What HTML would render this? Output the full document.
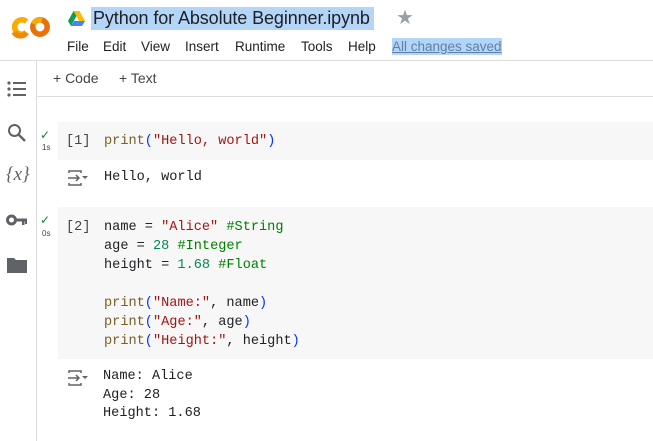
<!DOCTYPE html>
<html><head><style>
body{margin:0;width:653px;height:441px;background:#fff;position:relative;overflow:hidden;font-family:"Liberation Sans",sans-serif;color:#202124}
.a{position:absolute}
.mono{font-family:"Liberation Mono",monospace;font-size:13.6px;white-space:pre;line-height:19px;color:#202124}
.k{color:#795e26}.s{color:#a31515}.p{color:#0431fa}.n{color:#098658}.c{color:#008000}
.menu span{position:absolute;top:0;white-space:nowrap}
</style></head><body>
<svg class="a" style="left:8px;top:15px" width="46" height="24" viewBox="0 0 46 24">
<path d="M18.5 6.5A7.2 7.2 0 1 0 18.5 17.5" fill="none" stroke="#f9ab00" stroke-width="5.5"/>
<path d="M6 17A7.2 7.2 0 0 0 18.5 17.5" fill="none" stroke="#ee8a0a" stroke-width="5.5"/>
<circle cx="32" cy="12" r="7.2" fill="none" stroke="#e8710a" stroke-width="5.5"/>
<path d="M25.5 9A7.2 7.2 0 0 1 34 5" fill="none" stroke="#f9ab00" stroke-width="5.5"/>
</svg>
<svg class="a" style="left:68px;top:11px" width="17" height="15" viewBox="0 0 17 15">
<polygon points="5.5,0 11.5,0 17,10 14,15" fill="#fbbc04"/>
<polygon points="5.5,0 0,10 3,15 8.5,5" fill="#0f9d58"/>
<polygon points="3,15 14,15 17,10 6,10" fill="#4285f4"/>
</svg>
<div class="a" style="left:91px;top:7px;height:23px;background:#b3d5f8;font-size:18px;line-height:23px;padding:0 4px 0 2px;letter-spacing:-0.1px">Python for Absolute Beginner.ipynb</div>
<div class="a" style="left:396px;top:5px;font-size:20px;color:#9aa0a6">★</div>
<div class="a menu" style="left:0;top:38px;font-size:13.5px;line-height:17px"><span style="left:67px">File</span><span style="left:103px">Edit</span><span style="left:141px">View</span><span style="left:185px">Insert</span><span style="left:235px">Runtime</span><span style="left:301px">Tools</span><span style="left:348px">Help</span><span style="left:392px;background:#b3d5f8;color:#5f7fa8;text-decoration:underline">All changes saved</span></div>
<div class="a" style="left:0;top:60px;width:653px;height:1px;background:#dadce0"></div>
<div class="a" style="left:36px;top:60px;width:1px;height:381px;background:#dadce0"></div>
<div class="a" style="left:37px;top:96px;width:616px;height:1px;background:#dadce0"></div>
<div class="a" style="left:53px;top:70px;font-size:14px;color:#444">+ Code</div>
<div class="a" style="left:119px;top:70px;font-size:14px;color:#444">+ Text</div>
<svg class="a" style="left:7px;top:80px" width="20" height="18" viewBox="0 0 20 18" fill="#5f6368"><circle cx="2" cy="3" r="1.6"/><circle cx="2" cy="9" r="1.6"/><circle cx="2" cy="15" r="1.6"/><rect x="6" y="2" width="13" height="2"/><rect x="6" y="8" width="13" height="2"/><rect x="6" y="14" width="13" height="2"/></svg>
<svg class="a" style="left:7px;top:123px" width="20" height="20" viewBox="0 0 20 20"><circle cx="7.5" cy="7.5" r="5.5" fill="none" stroke="#5f6368" stroke-width="2"/><line x1="11.5" y1="11.5" x2="18" y2="18" stroke="#5f6368" stroke-width="2.4"/></svg>
<div class="a" style="left:6px;top:164px;font-family:'Liberation Serif',serif;font-size:19px;font-style:italic;color:#5f6368">{<i>x</i>}</div>
<svg class="a" style="left:6px;top:213px" width="22" height="14" viewBox="0 0 22 14"><circle cx="5.5" cy="7" r="4" fill="none" stroke="#5f6368" stroke-width="3"/><rect x="9" y="5.5" width="12" height="3" fill="#5f6368"/><rect x="16" y="7" width="2.5" height="5" fill="#5f6368"/><rect x="19" y="7" width="2" height="4" fill="#5f6368"/></svg>
<svg class="a" style="left:7px;top:256px" width="20" height="17" viewBox="0 0 20 17"><path d="M0 2h7l2 2h11v13H0z" fill="#5f6368"/></svg>
<div class="a" style="left:58px;top:122px;width:595px;height:38px;background:#f7f7f7"></div>
<div class="a" style="left:40px;top:128px;color:#188038;font-size:12px">✓</div>
<div class="a" style="left:42px;top:143px;font-size:8px;color:#444">1s</div>
<div class="a mono" style="left:66px;top:132px;color:#444">[1]</div>
<div class="a mono" style="left:104px;top:132px"><span class="k">print</span><span class="p">(</span><span class="s">"Hello, world"</span><span class="p">)</span></div>
<svg class="a" style="left:67px;top:170px" width="22" height="16" viewBox="0 0 22 16" fill="none" stroke="#5f6368" stroke-width="1.5"><path d="M2 3V1h12v2M2 13v2h12v-2M1 8h11M9 5l3 3-3 3"/><path d="M15 6h6l-3 3z" fill="#5f6368" stroke="none"/></svg>
<div class="a mono" style="left:104px;top:168px">Hello, world</div>
<div class="a" style="left:58px;top:207px;width:595px;height:152px;background:#f7f7f7"></div>
<div class="a" style="left:40px;top:213px;color:#188038;font-size:12px">✓</div>
<div class="a" style="left:42px;top:229px;font-size:8px;color:#444">0s</div>
<div class="a mono" style="left:66px;top:218px;color:#444">[2]</div>
<div class="a mono" style="left:104px;top:218px">name = <span class="s">"Alice"</span> <span class="c">#String</span>
age = <span class="n">28</span> <span class="c">#Integer</span>
height = <span class="n">1.68</span> <span class="c">#Float</span>

<span class="k">print</span><span class="p">(</span><span class="s">"Name:"</span>, name<span class="p">)</span>
<span class="k">print</span><span class="p">(</span><span class="s">"Age:"</span>, age<span class="p">)</span>
<span class="k">print</span><span class="p">(</span><span class="s">"Height:"</span>, height<span class="p">)</span></div>
<svg class="a" style="left:67px;top:370px" width="22" height="16" viewBox="0 0 22 16" fill="none" stroke="#5f6368" stroke-width="1.5"><path d="M2 3V1h12v2M2 13v2h12v-2M1 8h11M9 5l3 3-3 3"/><path d="M15 6h6l-3 3z" fill="#5f6368" stroke="none"/></svg>
<div class="a mono" style="left:103px;top:368px;line-height:18.5px">Name: Alice
Age: 28
Height: 1.68</div>
</body></html>
